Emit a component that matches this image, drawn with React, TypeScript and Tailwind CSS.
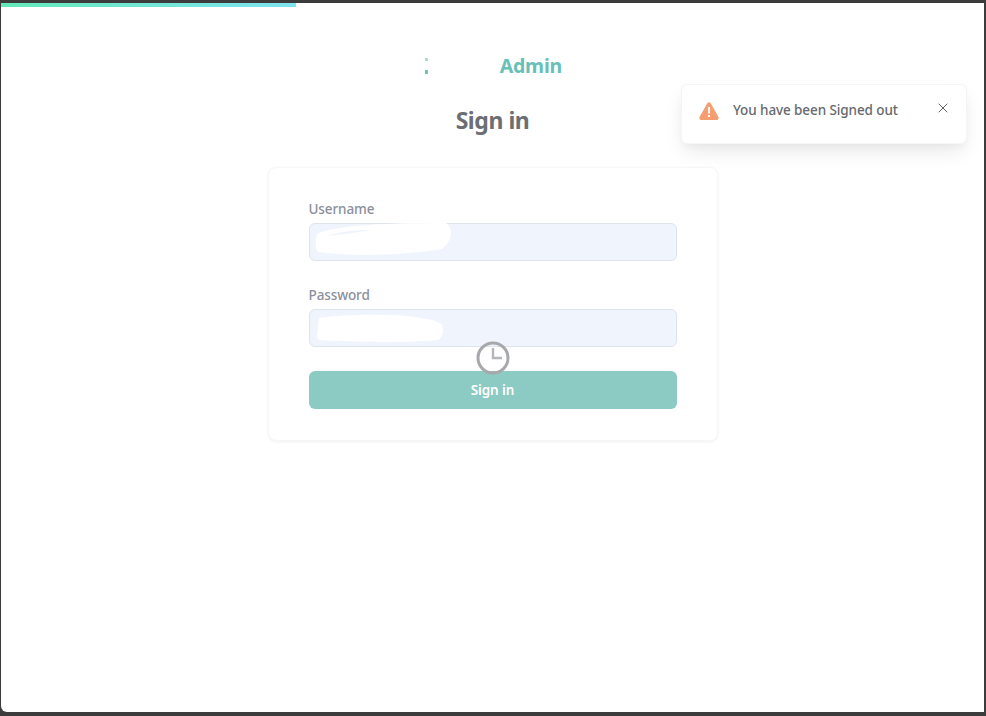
import React from "react";
import { X } from "lucide-react";

function Field({ label, blob }: { label: string; blob: React.ReactNode }) {
  return (
    <div>
      <label className="block text-[13.5px] leading-5 font-medium tracking-[-0.1px] text-[#8a8f9c]">{label}</label>
      <div className="relative mt-[4px] h-[38px] rounded-md border border-[#dfe3ec] bg-[#f0f4fd]">{blob}</div>
    </div>
  );
}

export default function App() {
  return (
    <div className="h-[716px] w-[986px] bg-[#3c3c3c] pt-[3px] pl-px pr-[2px] pb-[4px] font-['Noto_Sans',sans-serif]">
      <div className="relative h-full w-full rounded-bl-md bg-white">
        <div className="h-1 w-[295px] bg-gradient-to-r from-[#64e8b8] to-[#7fe3ef]" />

        <div className="flex flex-col items-center pt-[43px]">
          <div className="flex h-8 w-[139px] items-center justify-between">
            <div className="flex flex-col gap-[9px] pl-[2px]">
              <span className="h-[3px] w-[3px] bg-[#a5ded6]" />
              <span className="h-[4px] w-[3px] bg-[#6fc4b9]" />
            </div>
            <span className="text-[19.5px] leading-8 font-bold tracking-[-0.2px] text-[#68c0b7]">Admin</span>
          </div>
          <h1 className="mt-[22px] text-[23px] leading-8 font-bold tracking-[-0.45px] text-[#6b6e73]">Sign in</h1>

          <div className="relative mt-[31px] flex h-[274px] w-[450px] flex-col gap-[24px] rounded-lg border border-[#f7f7f8] bg-white px-10 pt-[31px] shadow-[0_1px_3px_rgba(0,0,0,0.06)]">
            <Field
              label="Username"
              blob={
                <svg className="absolute -top-px left-1 h-[38px] w-[140px]" viewBox="0 0 140 38">
                  <path
                    d="M3 11C20 3 60 0 132 0C140 6 138 18 128 26C90 32 40 34 4 29C0 24 2 17 3 11Z"
                    fill="#ffffff"
                  />
                  <path d="M13 13C25 9 40 7 56 7C40 10 28 11 13 13Z" fill="#eef3fc" />
                </svg>
              }
            />
            <Field
              label="Password"
              blob={
                <svg className="absolute -top-px left-1 h-[38px] w-[140px]" viewBox="0 0 140 38">
                  <path
                    d="M5 9C30 5 80 5 100 8C112 10 124 11 128 16C130 22 129 28 124 31C90 34 40 33 5 31C1 26 5 21 4 17Z"
                    fill="#ffffff"
                  />
                </svg>
              }
            />
            <button className="h-[38px] w-full rounded-md bg-[#8ccbc3] text-[13.5px] font-semibold tracking-[-0.1px] text-white">
              Sign in
            </button>
            <svg className="absolute top-[173px] left-[207px] h-[34px] w-[34px]" viewBox="0 0 34 34" fill="none">
              <circle cx="17" cy="17" r="15" stroke="#a6a8ab" strokeWidth="3" />
              <path d="M17 7V17H26" stroke="#b4b6b9" strokeWidth="2.400" />
            </svg>
          </div>
        </div>

        <div className="absolute top-[81px] left-[680px] flex h-[60px] w-[286px] items-start rounded-md border border-[#f5f5f6] bg-white pt-[15px] pl-[17px] pr-[15px] shadow-[0_10px_20px_-3px_rgba(0,0,0,0.09),0_4px_8px_-2px_rgba(0,0,0,0.04)]">
          <svg className="mt-[1px] h-[20px] w-[20px] shrink-0" viewBox="0 0 20 20">
            <path
              d="M8.3 2.2c.8-1.4 2.6-1.4 3.4 0l7.6 13.6c.8 1.4-.1 3.2-1.7 3.2H2.400C.8 19-.1 17.200.7 15.800L8.300 2.200Z"
              fill="#f59e72"
            />
            <path d="M9.100 6h1.800v6.500H9.100z M9.100 14h1.800v2H9.100z" fill="#ffffff" />
          </svg>
          <span className="ml-[14px] flex-1 text-[13.5px] leading-5 font-medium tracking-[-0.1px] text-[#66696e]">You have been Signed out</span>
          <X className="h-4 w-4 text-[#5f6168]" strokeWidth={1.5} />
        </div>
      </div>
    </div>
  );
}
